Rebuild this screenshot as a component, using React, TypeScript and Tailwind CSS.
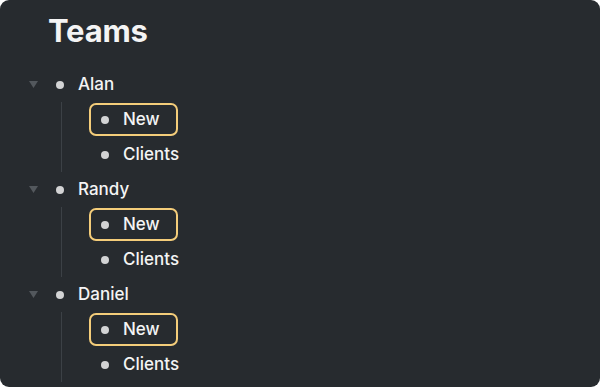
import React from 'react'

interface Team {
  name: string
  children: { name: string; highlighted?: boolean }[]
}

const teams: Team[] = [
  { name: 'Alan', children: [{ name: 'New', highlighted: true }, { name: 'Clients' }] },
  { name: 'Randy', children: [{ name: 'New', highlighted: true }, { name: 'Clients' }] },
  { name: 'Daniel', children: [{ name: 'New', highlighted: true }, { name: 'Clients' }] },
]

const Bullet = () => <span className="block w-[8px] h-[8px] rounded-full bg-[#d2d3d4] shrink-0" />

export default function App() {
  return (
    <div className="w-[600px] h-[387px] bg-white" style={{ fontFamily: 'Inter, "Liberation Sans", sans-serif' }}>
      <div className="w-full h-full rounded-[9px] bg-[#272b2f] text-[#f4f4f4]">
        <h1 className="pl-[48px] pt-[14px] text-[31px] leading-[34px] font-bold tracking-[-0.2px]">Teams</h1>

        <div className="mt-[19px]">
          {teams.map((team) => (
            <div key={team.name}>
              {/* Parent row */}
              <div className="flex items-center h-[35px]">
                <svg className="ml-[29px] w-[9px] h-[7px] shrink-0" viewBox="0 0 9 7">
                  <path d="M0 0 H9 L4.5 7 Z" fill="#53585d" />
                </svg>
                <span className="ml-[18px]">
                  <Bullet />
                </span>
                <span className="ml-[14px] text-[17px] font-medium">{team.name}</span>
              </div>

              {/* Children */}
              <div className="ml-[61px] border-l border-[#3c4146]">
                {team.children.map((child) => (
                  <div key={child.name} className="h-[35px] flex items-center">
                    <div
                      className={`ml-[27px] w-[89px] h-[33px] flex items-center pl-[10px] rounded-[7px] border-2 ${
                        child.highlighted ? 'border-[#f4cd7a]' : 'border-transparent'
                      }`}
                    >
                      <Bullet />
                      <span className="ml-[14px] text-[17px] font-medium">{child.name}</span>
                    </div>
                  </div>
                ))}
              </div>
            </div>
          ))}
        </div>
      </div>
    </div>
  )
}
